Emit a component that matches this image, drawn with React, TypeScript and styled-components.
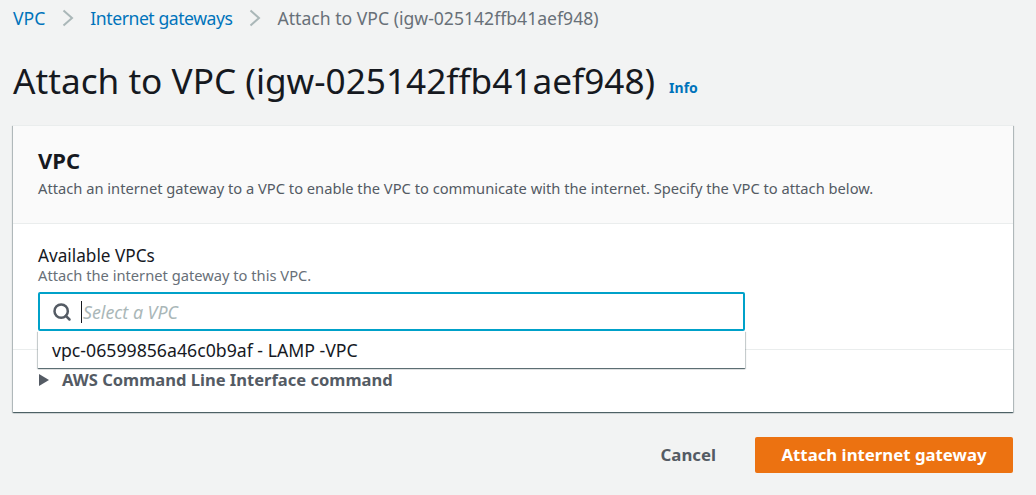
import React from 'react';
import styled, { createGlobalStyle } from 'styled-components';
import { Search } from 'lucide-react';

const GlobalStyle = createGlobalStyle`
  html, body {
    margin: 0;
    padding: 0;
    background: #f2f3f3;
    font-family: "Noto Sans", sans-serif;
    color: #16191f;
    overflow: hidden;
  }
`;

const Page = styled.div`
  width: 1036px;
  height: 495px;
  padding: 0 23px 0 13px;
  box-sizing: border-box;
`;

const Breadcrumbs = styled.nav`
  height: 35px;
  display: flex;
  align-items: center;
  font-size: 17.6px;
`;

const Crumb = styled.a<{ $tight?: boolean }>`
  color: #0073bb;
  letter-spacing: ${(p) => (p.$tight ? '-0.45px' : '0')};
`;

const CrumbCurrent = styled.span`
  color: #687078;
`;

const Separator = styled.svg`
  width: 12px;
  height: 18px;
  margin: 0 16.5px;
  fill: none;
  stroke: #aab7b8;
  stroke-width: 2;
`;

const TitleRow = styled.div`
  height: 90px;
  display: flex;
  align-items: center;
  gap: 14px;
`;

const Title = styled.h1`
  margin: 0;
  font-size: 35.2px;
  font-weight: 400;
  line-height: 44px;
`;

const InfoLink = styled.a`
  color: #0073bb;
  font-size: 14px;
  font-weight: 700;
  margin-top: 14px;
`;

const Panel = styled.section`
  height: 287px;
  background: #fff;
  border-top: 1px solid #eaeded;
  box-shadow: 0 1px 1px 0 rgba(0, 28, 36, 0.5), 1px 1px 1px 0 rgba(0, 28, 36, 0.2), -1px 1px 1px 0 rgba(0, 28, 36, 0.2);
  box-sizing: border-box;
`;

const PanelHeader = styled.header`
  height: 98px;
  padding: 20px 25px 0;
  box-sizing: border-box;
  background: #fafafa;
  border-bottom: 1px solid #eaeded;
`;

const PanelTitle = styled.h2`
  margin: 0;
  font-size: 22px;
  font-weight: 700;
  line-height: 28px;
`;

const PanelDescription = styled.p`
  margin: 4px 0 0;
  font-size: 14.7px;
  line-height: 20px;
  color: #545b64;
`;

const FormBody = styled.div`
  height: 126px;
  padding: 22px 25px 0;
  box-sizing: border-box;
  border-bottom: 1px solid #eaeded;
`;

const FieldLabel = styled.label`
  display: block;
  font-size: 17.2px;
  line-height: 20px;
`;

const FieldHint = styled.div`
  font-size: 14.7px;
  line-height: 18px;
  color: #687078;
`;

const Combo = styled.div`
  position: relative;
  width: 707px;
  margin-top: 8px;
`;

const SearchBox = styled.div`
  height: 39px;
  display: flex;
  align-items: center;
  padding-left: 12px;
  box-sizing: border-box;
  background: #fff;
  border: 2px solid #00a1c9;
  border-radius: 2px;
  color: #545b64;
`;

const Placeholder = styled.span`
  margin-left: 9px;
  padding-left: 1px;
  border-left: 1px solid #16191f;
  font-size: 17.8px;
  line-height: 22px;
  font-style: italic;
  color: #aab7b8;
`;

const Menu = styled.div`
  position: absolute;
  top: 39px;
  left: 0;
  right: 0;
  height: 37px;
  display: flex;
  align-items: center;
  padding-left: 14px;
  background: #fff;
  font-size: 17.7px;
  box-shadow: 0 1px 1px 0 rgba(0, 28, 36, 0.5), 1px 1px 1px 0 rgba(0, 28, 36, 0.15), -1px 1px 1px 0 rgba(0, 28, 36, 0.15);
`;

const Expander = styled.div`
  display: flex;
  align-items: center;
  gap: 12px;
  padding: 19px 25px 0;
  font-size: 16.55px;
  line-height: 22px;
  font-weight: 700;
  color: #545b64;
`;

const Caret = styled.svg`
  width: 12px;
  height: 12px;
  fill: #545b64;
`;

const Actions = styled.div`
  display: flex;
  justify-content: flex-end;
  align-items: center;
  gap: 39px;
  margin-top: 25px;
`;

const CancelButton = styled.button`
  border: 0;
  padding: 0 0 2px;
  background: none;
  font: 700 16.8px "Noto Sans", sans-serif;
  color: #545b64;
`;

const PrimaryButton = styled.button`
  width: 258px;
  height: 36px;
  border: 0;
  padding: 0 0 2px;
  border-radius: 2px;
  background: #ec7211;
  color: #fff;
  font: 700 16.8px "Noto Sans", sans-serif;
`;

const Chevron = () => (
  <Separator viewBox="0 0 12 18">
    <path d="M1.5 1.5 10 9l-8.5 7.5" />
  </Separator>
);

export default function App() {
  return (
    <>
      <GlobalStyle />
      <Page>
        <Breadcrumbs>
          <Crumb>VPC</Crumb>
          <Chevron />
          <Crumb $tight>Internet gateways</Crumb>
          <Chevron />
          <CrumbCurrent>Attach to VPC (igw-025142ffb41aef948)</CrumbCurrent>
        </Breadcrumbs>
        <TitleRow>
          <Title>Attach to VPC (igw-025142ffb41aef948)</Title>
          <InfoLink>Info</InfoLink>
        </TitleRow>
        <Panel>
          <PanelHeader>
            <PanelTitle>VPC</PanelTitle>
            <PanelDescription>
              Attach an internet gateway to a VPC to enable the VPC to communicate with the internet. Specify the VPC to attach below.
            </PanelDescription>
          </PanelHeader>
          <FormBody>
            <FieldLabel>Available VPCs</FieldLabel>
            <FieldHint>Attach the internet gateway to this VPC.</FieldHint>
            <Combo>
              <SearchBox>
                <Search size={20} strokeWidth={3} />
                <Placeholder>Select a VPC</Placeholder>
              </SearchBox>
              <Menu>vpc-06599856a46c0b9af - LAMP -VPC</Menu>
            </Combo>
          </FormBody>
          <Expander>
            <Caret viewBox="0 0 12 12">
              <path d="M1 0 11 6 1 12z" />
            </Caret>
            AWS Command Line Interface command
          </Expander>
        </Panel>
        <Actions>
          <CancelButton>Cancel</CancelButton>
          <PrimaryButton>Attach internet gateway</PrimaryButton>
        </Actions>
      </Page>
    </>
  );
}
